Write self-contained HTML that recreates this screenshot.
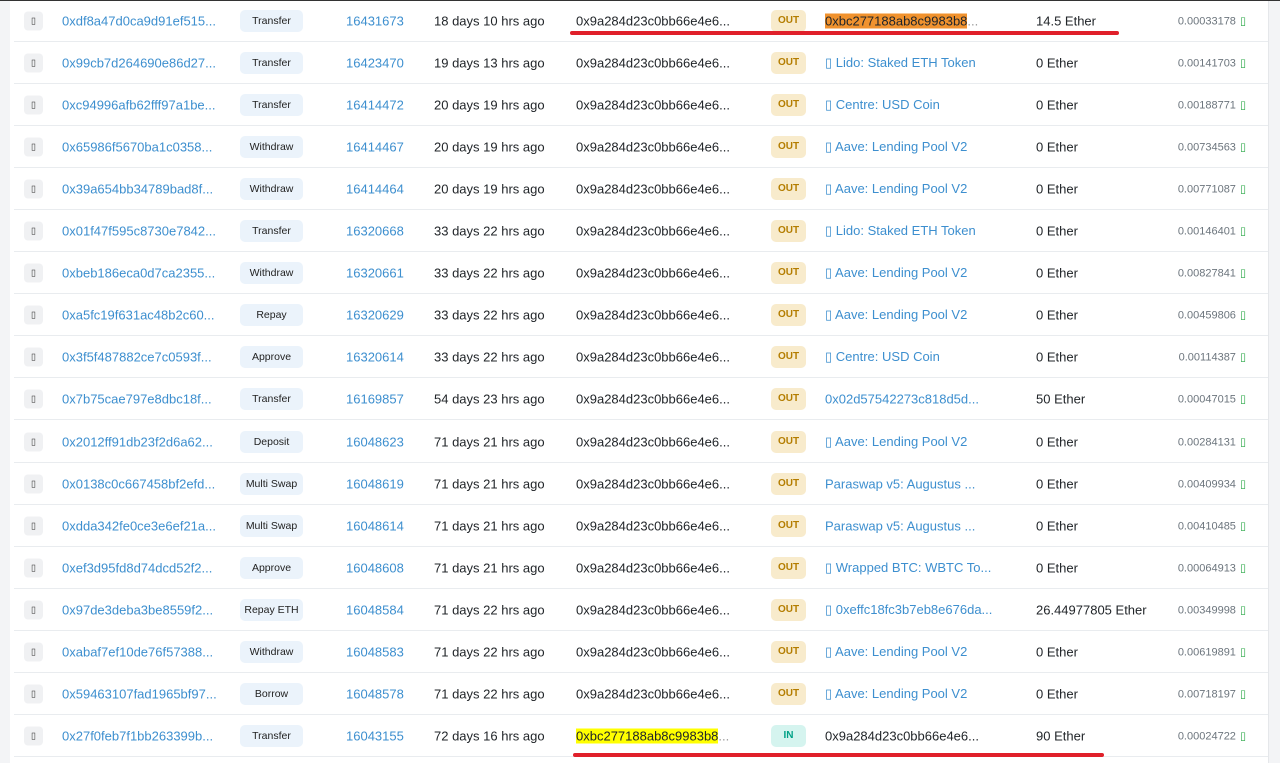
<!DOCTYPE html>
<html><head><meta charset="utf-8"><style>
*{margin:0;padding:0;box-sizing:border-box}
body{width:1280px;height:763px;background:#fff;font-family:"Liberation Sans",Arial,sans-serif;font-size:13px;color:#212529;position:relative;overflow:hidden}
.ls{position:absolute;left:0;top:0;width:10px;height:763px;background:#f3f4f6}
.rs{position:absolute;right:0;top:0;width:12px;height:763px;background:#f3f4f6;border-left:1px solid #e5e7ea}
.top{position:absolute;left:0;top:0;width:1280px;height:1px;background:#333}
.row{position:absolute;left:14px;width:1254px;height:42px;border-bottom:1px solid #e9ecef}
.row>*{position:absolute;top:50%;transform:translateY(-50%);white-space:nowrap}
.ib{left:10px;width:19px;height:19px;background:#f0f1f3;border-radius:4px;font-size:9px;color:#333;display:flex;align-items:center;justify-content:center}
.h{left:48px;color:#3d8fcf}
.m{left:226px;width:63px;height:22px;background:#ebf3fb;border-radius:5px;font-size:10.5px;display:flex;align-items:center;justify-content:center;color:#222}
.b{left:332px;color:#3d8fcf}
.a{left:420px}
.f{left:562px}
.d{left:757px;width:35px;height:22px;border-radius:5px;font-size:10px;display:flex;align-items:center;justify-content:center;font-weight:bold;background:#f8ebcc;color:#b47d00}
.d.in{background:#d5f4ef;color:#00a186}
.t{left:811px;color:#3d8fcf}
.t.k{color:#212529}
.v{left:1022px}
.fee{right:22px;font-size:11px;color:#6c757d}
.fee i{font-style:normal;color:#28a745;font-size:11px;margin-left:4px}
.red{position:absolute;height:4px;background:#e0202a;border-radius:2px}
</style></head><body>
<div class="ls"></div><div class="rs"></div><div class="top"></div>

<div class="row" style="top:0px"><span class="ib">▯</span><span class="h">0xdf8a47d0ca9d91ef515...</span><span class="m">Transfer</span><span class="b">16431673</span><span class="a">18 days 10 hrs ago</span><span class="f">0x9a284d23c0bb66e4e6...</span><span class="d">OUT</span><span class="t k"><span style="background:#f0922e">0xbc277188ab8c9983b8</span><span style="color:#999">...</span></span><span class="v">14.5 Ether</span><span class="fee">0.00033178<i>▯</i></span></div>
<div class="row" style="top:42px"><span class="ib">▯</span><span class="h">0x99cb7d264690e86d27...</span><span class="m">Transfer</span><span class="b">16423470</span><span class="a">19 days 13 hrs ago</span><span class="f">0x9a284d23c0bb66e4e6...</span><span class="d">OUT</span><span class="t">▯ Lido: Staked ETH Token</span><span class="v">0 Ether</span><span class="fee">0.00141703<i>▯</i></span></div>
<div class="row" style="top:84px"><span class="ib">▯</span><span class="h">0xc94996afb62fff97a1be...</span><span class="m">Transfer</span><span class="b">16414472</span><span class="a">20 days 19 hrs ago</span><span class="f">0x9a284d23c0bb66e4e6...</span><span class="d">OUT</span><span class="t">▯ Centre: USD Coin</span><span class="v">0 Ether</span><span class="fee">0.00188771<i>▯</i></span></div>
<div class="row" style="top:126px"><span class="ib">▯</span><span class="h">0x65986f5670ba1c0358...</span><span class="m">Withdraw</span><span class="b">16414467</span><span class="a">20 days 19 hrs ago</span><span class="f">0x9a284d23c0bb66e4e6...</span><span class="d">OUT</span><span class="t">▯ Aave: Lending Pool V2</span><span class="v">0 Ether</span><span class="fee">0.00734563<i>▯</i></span></div>
<div class="row" style="top:168px"><span class="ib">▯</span><span class="h">0x39a654bb34789bad8f...</span><span class="m">Withdraw</span><span class="b">16414464</span><span class="a">20 days 19 hrs ago</span><span class="f">0x9a284d23c0bb66e4e6...</span><span class="d">OUT</span><span class="t">▯ Aave: Lending Pool V2</span><span class="v">0 Ether</span><span class="fee">0.00771087<i>▯</i></span></div>
<div class="row" style="top:210px"><span class="ib">▯</span><span class="h">0x01f47f595c8730e7842...</span><span class="m">Transfer</span><span class="b">16320668</span><span class="a">33 days 22 hrs ago</span><span class="f">0x9a284d23c0bb66e4e6...</span><span class="d">OUT</span><span class="t">▯ Lido: Staked ETH Token</span><span class="v">0 Ether</span><span class="fee">0.00146401<i>▯</i></span></div>
<div class="row" style="top:252px"><span class="ib">▯</span><span class="h">0xbeb186eca0d7ca2355...</span><span class="m">Withdraw</span><span class="b">16320661</span><span class="a">33 days 22 hrs ago</span><span class="f">0x9a284d23c0bb66e4e6...</span><span class="d">OUT</span><span class="t">▯ Aave: Lending Pool V2</span><span class="v">0 Ether</span><span class="fee">0.00827841<i>▯</i></span></div>
<div class="row" style="top:294px"><span class="ib">▯</span><span class="h">0xa5fc19f631ac48b2c60...</span><span class="m">Repay</span><span class="b">16320629</span><span class="a">33 days 22 hrs ago</span><span class="f">0x9a284d23c0bb66e4e6...</span><span class="d">OUT</span><span class="t">▯ Aave: Lending Pool V2</span><span class="v">0 Ether</span><span class="fee">0.00459806<i>▯</i></span></div>
<div class="row" style="top:336px"><span class="ib">▯</span><span class="h">0x3f5f487882ce7c0593f...</span><span class="m">Approve</span><span class="b">16320614</span><span class="a">33 days 22 hrs ago</span><span class="f">0x9a284d23c0bb66e4e6...</span><span class="d">OUT</span><span class="t">▯ Centre: USD Coin</span><span class="v">0 Ether</span><span class="fee">0.00114387<i>▯</i></span></div>
<div class="row" style="top:378px"><span class="ib">▯</span><span class="h">0x7b75cae797e8dbc18f...</span><span class="m">Transfer</span><span class="b">16169857</span><span class="a">54 days 23 hrs ago</span><span class="f">0x9a284d23c0bb66e4e6...</span><span class="d">OUT</span><span class="t">0x02d57542273c818d5d...</span><span class="v">50 Ether</span><span class="fee">0.00047015<i>▯</i></span></div>
<div class="row" style="top:421px"><span class="ib">▯</span><span class="h">0x2012ff91db23f2d6a62...</span><span class="m">Deposit</span><span class="b">16048623</span><span class="a">71 days 21 hrs ago</span><span class="f">0x9a284d23c0bb66e4e6...</span><span class="d">OUT</span><span class="t">▯ Aave: Lending Pool V2</span><span class="v">0 Ether</span><span class="fee">0.00284131<i>▯</i></span></div>
<div class="row" style="top:463px"><span class="ib">▯</span><span class="h">0x0138c0c667458bf2efd...</span><span class="m">Multi Swap</span><span class="b">16048619</span><span class="a">71 days 21 hrs ago</span><span class="f">0x9a284d23c0bb66e4e6...</span><span class="d">OUT</span><span class="t">Paraswap v5: Augustus ...</span><span class="v">0 Ether</span><span class="fee">0.00409934<i>▯</i></span></div>
<div class="row" style="top:505px"><span class="ib">▯</span><span class="h">0xdda342fe0ce3e6ef21a...</span><span class="m">Multi Swap</span><span class="b">16048614</span><span class="a">71 days 21 hrs ago</span><span class="f">0x9a284d23c0bb66e4e6...</span><span class="d">OUT</span><span class="t">Paraswap v5: Augustus ...</span><span class="v">0 Ether</span><span class="fee">0.00410485<i>▯</i></span></div>
<div class="row" style="top:547px"><span class="ib">▯</span><span class="h">0xef3d95fd8d74dcd52f2...</span><span class="m">Approve</span><span class="b">16048608</span><span class="a">71 days 21 hrs ago</span><span class="f">0x9a284d23c0bb66e4e6...</span><span class="d">OUT</span><span class="t">▯ Wrapped BTC: WBTC To...</span><span class="v">0 Ether</span><span class="fee">0.00064913<i>▯</i></span></div>
<div class="row" style="top:589px"><span class="ib">▯</span><span class="h">0x97de3deba3be8559f2...</span><span class="m">Repay ETH</span><span class="b">16048584</span><span class="a">71 days 22 hrs ago</span><span class="f">0x9a284d23c0bb66e4e6...</span><span class="d">OUT</span><span class="t">▯ 0xeffc18fc3b7eb8e676da...</span><span class="v">26.44977805 Ether</span><span class="fee">0.00349998<i>▯</i></span></div>
<div class="row" style="top:631px"><span class="ib">▯</span><span class="h">0xabaf7ef10de76f57388...</span><span class="m">Withdraw</span><span class="b">16048583</span><span class="a">71 days 22 hrs ago</span><span class="f">0x9a284d23c0bb66e4e6...</span><span class="d">OUT</span><span class="t">▯ Aave: Lending Pool V2</span><span class="v">0 Ether</span><span class="fee">0.00619891<i>▯</i></span></div>
<div class="row" style="top:673px"><span class="ib">▯</span><span class="h">0x59463107fad1965bf97...</span><span class="m">Borrow</span><span class="b">16048578</span><span class="a">71 days 22 hrs ago</span><span class="f">0x9a284d23c0bb66e4e6...</span><span class="d">OUT</span><span class="t">▯ Aave: Lending Pool V2</span><span class="v">0 Ether</span><span class="fee">0.00718197<i>▯</i></span></div>
<div class="row" style="top:715px"><span class="ib">▯</span><span class="h">0x27f0feb7f1bb263399b...</span><span class="m">Transfer</span><span class="b">16043155</span><span class="a">72 days 16 hrs ago</span><span class="f"><span style="background:#ffff00">0xbc277188ab8c9983b8</span><span style="color:#999">...</span></span><span class="d in">IN</span><span class="t k">0x9a284d23c0bb66e4e6...</span><span class="v">90 Ether</span><span class="fee">0.00024722<i>▯</i></span></div>

<div class="red" style="left:570px;top:31px;width:549px"></div>
<div class="red" style="left:573px;top:753px;width:531px"></div>
</body></html>
